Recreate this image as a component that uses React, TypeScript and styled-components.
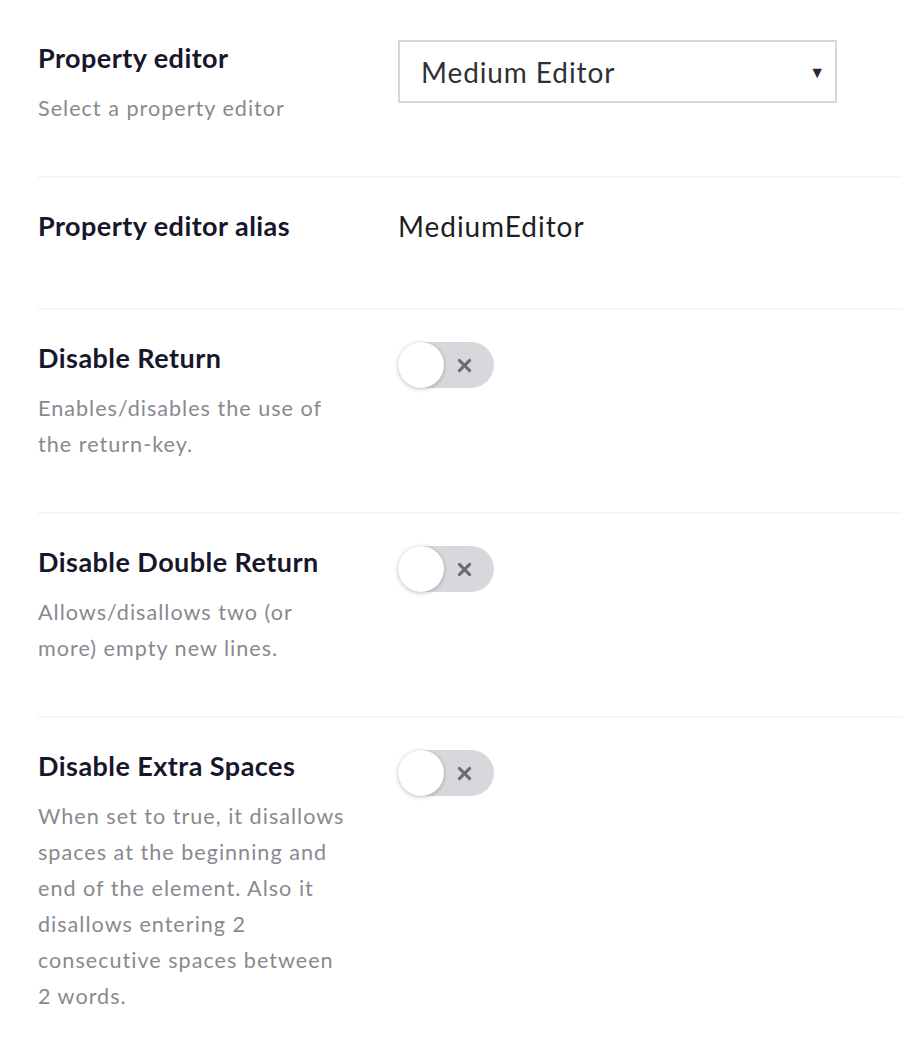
import styled, { createGlobalStyle } from "styled-components";

const GlobalStyle = createGlobalStyle`
  html, body {
    margin: 0;
    padding: 0;
    background: #ffffff;
  }
  body {
    font-family: Lato, "Open Sans", sans-serif;
    -webkit-font-smoothing: antialiased;
  }
`;

type Prop = {
  label: string;
  description?: string;
  kind: "select" | "text" | "toggle";
  value?: string;
};

const properties: Prop[] = [
  {
    label: "Property editor",
    description: "Select a property editor",
    kind: "select",
    value: "Medium Editor",
  },
  { label: "Property editor alias", kind: "text", value: "MediumEditor" },
  {
    label: "Disable Return",
    description: "Enables/disables the use of the return-key.",
    kind: "toggle",
  },
  {
    label: "Disable Double Return",
    description: "Allows/disallows two (or more) empty new lines.",
    kind: "toggle",
  },
  {
    label: "Disable Extra Spaces",
    description:
      "When set to true, it disallows spaces at the beginning and end of the element. Also it disallows entering 2 consecutive spaces between 2 words.",
    kind: "toggle",
  },
];

function Toggle() {
  return (
    <Track>
      <Knob />
      <Cross viewBox="0 0 16 16">
        <path d="M2.5 2.5 L13.5 13.5 M13.5 2.5 L2.5 13.5" />
      </Cross>
    </Track>
  );
}

function Control({ prop }: { prop: Prop }) {
  if (prop.kind === "select") {
    return (
      <Select>
        <span>{prop.value}</span>
        <Arrow>▼</Arrow>
      </Select>
    );
  }
  if (prop.kind === "text") return <Value>{prop.value}</Value>;
  return <Toggle />;
}

export default function App() {
  return (
    <>
      <GlobalStyle />
      <Page>
        {properties.map((p, i) => (
          <Row key={p.label} $first={i === 0} $tall={p.kind === "text"}>
            <Info>
              <Label>{p.label}</Label>
              {p.description && <Description>{p.description}</Description>}
            </Info>
            <Control prop={p} />
          </Row>
        ))}
      </Page>
    </>
  );
}

const Page = styled.div`
  display: flex;
  flex-direction: column;
  padding-left: 38px;
  padding-top: 10px;
`;

const Row = styled.div<{ $first: boolean; $tall: boolean }>`
  display: grid;
  grid-template-columns: 312px 1fr;
  column-gap: 48px;
  align-items: start;
  padding-top: 30px;
  padding-bottom: ${(p) => (p.$tall ? "64px" : "50px")};
  border-top: ${(p) => (p.$first ? "none" : "2px solid #f4f5f7")};
`;

const Info = styled.div`
  display: flex;
  flex-direction: column;
  gap: 14px;
`;

const Label = styled.div`
  font-size: 27px;
  line-height: 36px;
  font-weight: 700;
  letter-spacing: 0.45px;
  color: #17172b;
  white-space: nowrap;
`;

const Description = styled.div`
  font-size: 21.6px;
  line-height: 36px;
  letter-spacing: 1px;
  color: #8a898f;
`;

const Select = styled.div`
  width: 439px;
  height: 63px;
  box-sizing: border-box;
  border: 2px solid #d8d8dc;
  display: flex;
  align-items: center;
  justify-content: space-between;
  padding: 0 10px 0 21px;
  font-size: 28px;
  letter-spacing: 0.9px;
  color: #303036;
`;

const Arrow = styled.span`
  font-size: 16px;
  letter-spacing: 0;
  color: #2a2a2d;
`;

const Value = styled.div`
  font-size: 28px;
  line-height: 36px;
  letter-spacing: 0.95px;
  color: #1d1d26;
`;

const Track = styled.div`
  position: relative;
  width: 96px;
  height: 46px;
  margin-top: 2px;
  border-radius: 23px;
  background: #d8d7dc;
`;

const Knob = styled.div`
  position: absolute;
  left: 0;
  top: 0;
  width: 46px;
  height: 46px;
  border-radius: 50%;
  background: #ffffff;
  box-shadow: 0 1px 4px rgba(0, 0, 0, 0.25);
`;

const Cross = styled.svg`
  position: absolute;
  left: 59px;
  top: 16px;
  width: 15px;
  height: 15px;
  stroke: #6c6b72;
  stroke-width: 3.2;
  stroke-linecap: round;
  fill: none;
`;
